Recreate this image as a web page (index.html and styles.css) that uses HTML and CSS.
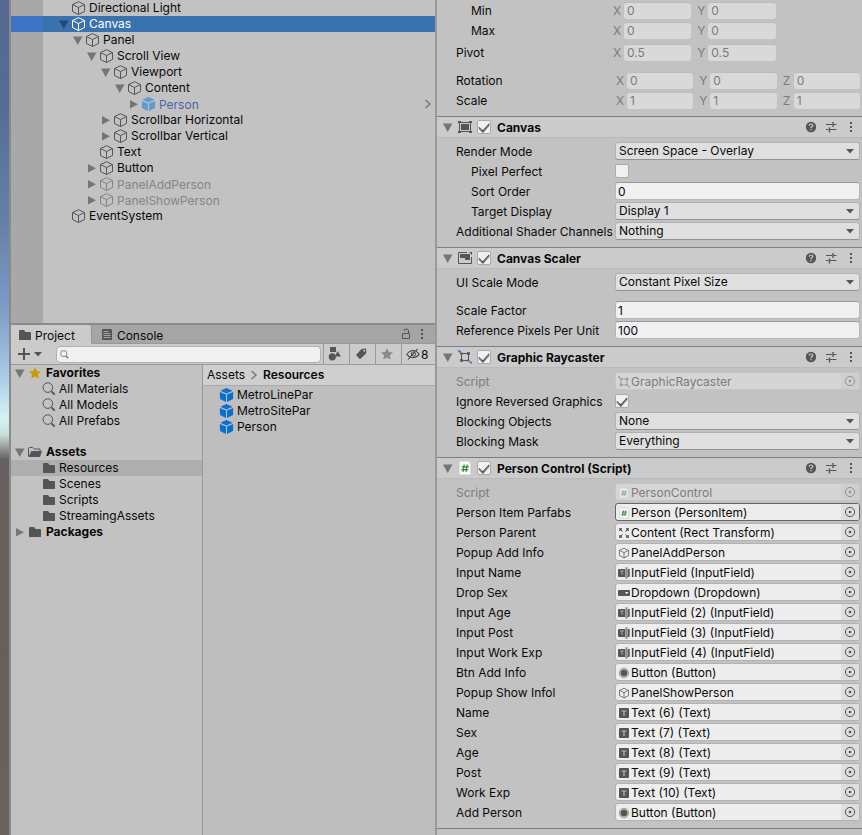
FILE: index.html
```html
<!DOCTYPE html>
<html lang="en">
<head>
<meta charset="utf-8">
<title>Editor</title>
<link rel="stylesheet" href="styles.css">
</head>
<body>
<svg class="defs" aria-hidden="true">
  <symbol id="down" viewBox="0 0 13 16"><path d="M2 4.500h9.500L6.700 13z" fill="currentColor"/></symbol>
  <symbol id="right" viewBox="0 0 13 16"><path d="M3 4v8.500L11 8.200z" fill="currentColor"/></symbol>
  <symbol id="cube" viewBox="0 0 15 16"><path d="M7.500 1.700 13.500 4.500v7L7.500 14.500 1.500 11.500v-7zM1.600 4.600 7.500 7.500l5.900-2.900M7.500 7.500v7" fill="none" stroke="currentColor" stroke-width="1" stroke-linejoin="round"/></symbol>
  <symbol id="prefab" viewBox="0 0 15 16"><path d="M7.500 1 13.600 3.700 7.500 6.500 1.400 3.700zM.9 4.900 7 7.600V15L.9 12zM14.100 4.900 8 7.600V15l6.100-3z" fill="currentColor"/></symbol>
  <symbol id="folder" viewBox="0 0 14 14"><path d="M1 3q0-1 1-1h4l1.500 2H12q1 0 1 1v7H1z" fill="currentColor"/></symbol>
  <symbol id="openfolder" viewBox="0 0 14 14"><path d="M.5 11.500V3.500q0-1 1-1h3L6.500 4H12v2" fill="none" stroke="currentColor" stroke-width="1"/><path d="M3.300 6H14L12 12H.5z" fill="currentColor"/></symbol>
  <symbol id="star" viewBox="0 0 14 14"><path d="m7 1 1.800 3.900 4.200.5-3.100 2.900.8 4.300L7 10.500l-3.700 2.100.8-4.300L1 5.400l4.200-.5z" fill="currentColor"/></symbol>
  <symbol id="search" viewBox="0 0 14 14"><circle cx="5.800" cy="5.600" r="4.800" fill="none" stroke="currentColor" stroke-width="1"/><path d="m9.500 9.500 3.200 3.200" stroke="currentColor" stroke-width="1.800"/></symbol>
  <symbol id="console" viewBox="0 0 14 14"><path d="M3 1h8l1 1v10H3q-1 0-1-1V2q0-1 1-1z" fill="currentColor"/><path d="M3.500 3.500h5M3.500 5.500h7M3.500 7.500h7M3.500 9.500h7" stroke="#a5a5a5" stroke-width="1"/></symbol>
  <symbol id="dots" viewBox="0 0 6 14"><path d="M2 2h2v2H2zM2 6h2v2H2zM2 10h2v2H2z" fill="currentColor"/></symbol>
  <symbol id="lock" viewBox="0 0 12 14"><path d="M2.500 6.500h7V11.500h-7zM4 4q0-2 2-2 2.500 0 2.500 2v2.500" fill="none" stroke="currentColor"/></symbol>
  <symbol id="caret" viewBox="0 0 10 6"><path d="M1 1h8L5 5.500z" fill="currentColor"/></symbol>
  <symbol id="tag" viewBox="0 0 14 14"><path d="M7.500 2 12 1.500l.3 4.700-6.300 6L2 8z" fill="currentColor"/><circle cx="10.200" cy="3.700" r="1" fill="#cbcbcb"/></symbol>
  <symbol id="shapes" viewBox="0 0 14 14"><path d="M2 0h6v5H2zM9.500 4 13 9.500H7z" fill="currentColor"/><circle cx="4.300" cy="9.800" r="3.600" fill="currentColor"/></symbol>
  <symbol id="eye" viewBox="0 0 14 12"><path d="M.8 6.500Q3.500 2.500 7 2.500t6.200 3.700Q10.500 9.800 7 9.800T.8 6.500zM2 11.500 11.500.8" fill="none" stroke="currentColor" stroke-width="1.100"/><circle cx="7.400" cy="6" r="2.100" fill="none" stroke="currentColor"/></symbol>
  <symbol id="help" viewBox="0 0 12 12"><circle cx="6" cy="6" r="5.200" fill="currentColor"/><path d="M4.200 4.700q0-1.700 1.800-1.700t1.800 1.500Q7.800 5.400 6 6.300v.9M6 8v1.300" fill="none" stroke="#cbcbcb" stroke-width="1.200"/></symbol>
  <symbol id="sliders" viewBox="0 0 12 12"><path d="M1 3.500h6M8 3.500h3.500M1 8.500h2.500M5 8.500h6.500" stroke="currentColor" stroke-width="1"/><path d="M8 1v5M4.500 6.500v5" stroke="currentColor" stroke-width="1.400"/></symbol>
  <symbol id="picker" viewBox="0 0 12 12"><circle cx="6" cy="6" r="4.600" fill="none" stroke="currentColor"/><circle cx="6" cy="6" r="1.300" fill="currentColor"/></symbol>
  <symbol id="canvas" viewBox="0 0 14 12"><path d="M1.500 1.500h11v9h-11z" fill="none" stroke="currentColor"/><path d="M3 3h8v6H3zM0 0h3v2H0zM11 0h3v2h-3zM0 10h3v2H0zM11 10h3v2h-3z" fill="currentColor"/></symbol>
  <symbol id="scaler" viewBox="0 0 14 12"><path d="M9 .5H.5v11h13V5" fill="none" stroke="currentColor"/><path d="M2 2h10v6H7V6H2zM11 0h3v3z" fill="currentColor"/></symbol>
  <symbol id="raycaster" viewBox="0 0 14 14"><path d="M3.500 3.500h7v7h-7z" fill="none" stroke="currentColor"/><path d="M2 2.500h3v2H2zM9 2h3v3H9zM2 9h3v3H2zM9 9.500h2.500v2H9z" fill="currentColor" opacity=".8"/><path d="m.3.500 2.500 2M11.800 11.500l1.900 1.900" stroke="#1d7bd8" stroke-width="1.700"/></symbol>
  <symbol id="script" viewBox="0 0 14 16"><path d="M2 1h8.500L13 3.500V14q0 1-1 1H2q-1 0-1-1V2q0-1 1-1z" fill="#f8f8f8" stroke="#b2b2b2" stroke-width=".5"/><path d="M6.200 4.500 5 12M9.200 4.500 8 12M3.800 6.800h7M3.300 9.700h7" stroke="#2c8a32" stroke-width="1.200"/></symbol>
  <symbol id="rect" viewBox="0 0 12 12"><path d="m2 2 3 3M10 2 7 5M2 10l3-3M10 10 7 7" stroke="#888"/><path d="M1 1h3v3H1zM8 1h3v3H8zM1 8h3v3H1zM8 8h3v3H8z" fill="currentColor" opacity=".8"/></symbol>
  <symbol id="inputfield" viewBox="0 0 12 12"><path d="M1 2h6.500v8H1q-1 0-1-1V3q0-1 1-1zM9.500 2H11q.7 0 .7.700v6.600q0 .7-.7.700H9.500z" fill="currentColor"/><path d="M8.500 1v10M7 1h3M7 11h3" stroke="#888" stroke-width="1"/><path d="M2.200 4h3.600M4 4v4" stroke="#a8a8a8"/></symbol>
  <symbol id="dropdown" viewBox="0 0 12 12"><rect y="3" width="12" height="6" rx="1" fill="currentColor"/><path d="M7 5h3.500L8.700 7.500z" fill="#eee"/></symbol>
  <symbol id="button" viewBox="0 0 12 12"><circle cx="6" cy="6" r="4.700" fill="#bbb" stroke="#999"/><circle cx="6" cy="6" r="3.300" fill="currentColor"/></symbol>
  <symbol id="text" viewBox="0 0 12 12"><rect x="1" y="1" width="10" height="10" rx="1" fill="currentColor"/><path d="M3.500 4h5M6 4v5" stroke="#bbb" stroke-width="1.200"/></symbol>
</svg>

<main class="editor">
  <div class="scene"></div>
  <div class="left">
    <section class="hierarchy" aria-label="Hierarchy">
      <div class="node d1"><span class="fold"></span><svg class="cube"><use href="#cube"/></svg>Directional Light</div>
      <div class="node d1 selected"><svg class="fold"><use href="#down"/></svg><svg class="cube"><use href="#cube"/></svg>Canvas</div>
      <div class="node d2"><svg class="fold"><use href="#down"/></svg><svg class="cube"><use href="#cube"/></svg>Panel</div>
      <div class="node d3"><svg class="fold"><use href="#down"/></svg><svg class="cube"><use href="#cube"/></svg>Scroll View</div>
      <div class="node d4"><svg class="fold"><use href="#down"/></svg><svg class="cube"><use href="#cube"/></svg>Viewport</div>
      <div class="node d5"><svg class="fold"><use href="#down"/></svg><svg class="cube"><use href="#cube"/></svg>Content</div>
      <div class="node d6 instance"><svg class="fold"><use href="#right"/></svg><svg class="cube"><use href="#prefab"/></svg><span>Person</span><svg class="open" viewBox="0 0 8 12"><path d="m1.500 2 4.500 4-4.500 4" fill="none" stroke="currentColor" stroke-width="1.500"/></svg></div>
      <div class="node d4"><svg class="fold"><use href="#right"/></svg><svg class="cube"><use href="#cube"/></svg>Scrollbar Horizontal</div>
      <div class="node d4"><svg class="fold"><use href="#right"/></svg><svg class="cube"><use href="#cube"/></svg>Scrollbar Vertical</div>
      <div class="node d3"><span class="fold"></span><svg class="cube"><use href="#cube"/></svg>Text</div>
      <div class="node d3"><svg class="fold"><use href="#right"/></svg><svg class="cube"><use href="#cube"/></svg>Button</div>
      <div class="node d3 inactive"><svg class="fold"><use href="#right"/></svg><svg class="cube"><use href="#cube"/></svg><span>PanelAddPerson</span></div>
      <div class="node d3 inactive"><svg class="fold"><use href="#right"/></svg><svg class="cube"><use href="#cube"/></svg><span>PanelShowPerson</span></div>
      <div class="node d1"><span class="fold"></span><svg class="cube"><use href="#cube"/></svg>EventSystem</div>
    </section>

    <section class="project" aria-label="Project">
      <div class="tabs">
        <button class="tab active"><svg class="i14"><use href="#folder"/></svg><span>Project</span></button>
        <button class="tab"><svg class="i14"><use href="#console"/></svg><span>Console</span></button>
        <button class="tool-icon push" aria-label="Lock"><svg class="lock"><use href="#lock"/></svg></button>
        <button class="tool-icon" aria-label="Menu"><svg class="dots"><use href="#dots"/></svg></button>
      </div>
      <div class="toolbar">
        <button class="add" aria-label="Create"><svg class="plus" viewBox="0 0 12 12"><path d="M6 0v12M0 6h12" stroke="currentColor" stroke-width="2"/></svg><svg class="caret"><use href="#caret"/></svg></button>
        <div class="searchbox"><svg><use href="#search"/></svg><input type="text" aria-label="Search"></div>
        <button class="filter" aria-label="Search by type"><svg class="i14"><use href="#shapes"/></svg></button>
        <button class="filter" aria-label="Search by label"><svg class="i14"><use href="#tag"/></svg></button>
        <button class="filter faded" aria-label="Save search"><svg class="i14"><use href="#star"/></svg></button>
        <button class="filter hidden-count" aria-label="Hidden packages"><svg class="eye"><use href="#eye"/></svg><span>8</span></button>
      </div>
      <div class="browser">
        <nav class="tree" aria-label="Folders">
          <div class="item top"><svg class="fold"><use href="#down"/></svg><svg class="i14 gold"><use href="#star"/></svg>Favorites</div>
          <div class="item"><svg class="i14 lens"><use href="#search"/></svg>All Materials</div>
          <div class="item"><svg class="i14 lens"><use href="#search"/></svg>All Models</div>
          <div class="item"><svg class="i14 lens"><use href="#search"/></svg>All Prefabs</div>
          <div class="item top spaced"><svg class="fold"><use href="#down"/></svg><svg class="i14"><use href="#openfolder"/></svg>Assets</div>
          <div class="item current"><svg class="i14"><use href="#folder"/></svg>Resources</div>
          <div class="item"><svg class="i14"><use href="#folder"/></svg>Scenes</div>
          <div class="item"><svg class="i14"><use href="#folder"/></svg>Scripts</div>
          <div class="item"><svg class="i14"><use href="#folder"/></svg>StreamingAssets</div>
          <div class="item top"><svg class="fold"><use href="#right"/></svg><svg class="i14"><use href="#folder"/></svg>Packages</div>
        </nav>
        <div class="files">
          <div class="crumbs"><span>Assets</span><svg viewBox="0 0 8 12"><path d="m1.500 2 4.500 4-4.500 4" fill="none" stroke="currentColor" stroke-width="1.500"/></svg><b>Resources</b></div>
          <div class="list">
            <div class="file"><svg class="cube"><use href="#prefab"/></svg>MetroLinePar</div>
            <div class="file"><svg class="cube"><use href="#prefab"/></svg>MetroSitePar</div>
            <div class="file"><svg class="cube"><use href="#prefab"/></svg>Person</div>
          </div>
        </div>
      </div>
    </section>
  </div>

  <section class="inspector" aria-label="Inspector">
    <div class="rows transform">
      <div class="row wide sub"><span class="label">Min</span><div class="vec"><label><span>X</span><input value="0" disabled></label><label><span>Y</span><input value="0" disabled></label></div></div>
      <div class="row wide sub"><span class="label">Max</span><div class="vec"><label><span>X</span><input value="0" disabled></label><label><span>Y</span><input value="0" disabled></label></div></div>
      <div class="row wide pivot"><span class="label">Pivot</span><div class="vec"><label><span>X</span><input value="0.5" disabled></label><label><span>Y</span><input value="0.5" disabled></label></div></div>
      <div class="row gap"><span class="label">Rotation</span><div class="vec"><label><span>X</span><input value="0" disabled></label><label><span>Y</span><input value="0" disabled></label><label><span>Z</span><input value="0" disabled></label></div></div>
      <div class="row"><span class="label">Scale</span><div class="vec"><label><span>X</span><input value="1" disabled></label><label><span>Y</span><input value="1" disabled></label><label><span>Z</span><input value="1" disabled></label></div></div>
    </div>

    <section class="component">
      <header><svg class="fold"><use href="#down"/></svg><svg class="kind"><use href="#canvas"/></svg><input type="checkbox" id="canvas-on" checked><label for="canvas-on">Canvas</label>
        <button aria-label="Help"><svg><use href="#help"/></svg></button><button aria-label="Presets"><svg><use href="#sliders"/></svg></button><button aria-label="Menu"><svg class="dots"><use href="#dots"/></svg></button></header>
      <div class="rows">
        <div class="row"><label class="label" for="render">Render Mode</label><div class="select"><select id="render"><option>Screen Space - Overlay</option></select><svg><use href="#caret"/></svg></div></div>
        <div class="row sub"><label class="label" for="pixel">Pixel Perfect</label><input type="checkbox" id="pixel"></div>
        <div class="row sub"><label class="label" for="order">Sort Order</label><input class="field" id="order" value="0"></div>
        <div class="row sub"><label class="label" for="display">Target Display</label><div class="select"><select id="display"><option>Display 1</option></select><svg><use href="#caret"/></svg></div></div>
        <div class="row"><label class="label" for="channels">Additional Shader Channels</label><div class="select"><select id="channels"><option>Nothing</option></select><svg><use href="#caret"/></svg></div></div>
      </div>
    </section>

    <section class="component">
      <header><svg class="fold"><use href="#down"/></svg><svg class="kind"><use href="#scaler"/></svg><input type="checkbox" id="scaler-on" checked><label for="scaler-on">Canvas Scaler</label>
        <button aria-label="Help"><svg><use href="#help"/></svg></button><button aria-label="Presets"><svg><use href="#sliders"/></svg></button><button aria-label="Menu"><svg class="dots"><use href="#dots"/></svg></button></header>
      <div class="rows">
        <div class="row"><label class="label" for="scalemode">UI Scale Mode</label><div class="select"><select id="scalemode"><option>Constant Pixel Size</option></select><svg><use href="#caret"/></svg></div></div>
        <div class="row gap"><label class="label" for="factor">Scale Factor</label><input class="field" id="factor" value="1"></div>
        <div class="row"><label class="label" for="ppu">Reference Pixels Per Unit</label><input class="field" id="ppu" value="100"></div>
      </div>
    </section>

    <section class="component">
      <header><svg class="fold"><use href="#down"/></svg><svg class="kind"><use href="#raycaster"/></svg><input type="checkbox" id="ray-on" checked><label for="ray-on">Graphic Raycaster</label>
        <button aria-label="Help"><svg><use href="#help"/></svg></button><button aria-label="Presets"><svg><use href="#sliders"/></svg></button><button aria-label="Menu"><svg class="dots"><use href="#dots"/></svg></button></header>
      <div class="rows">
        <div class="row off"><label class="label" for="rayscript">Script</label><div class="object"><button class="ref" id="rayscript" disabled><svg><use href="#raycaster"/></svg>GraphicRaycaster</button><button class="pick" aria-label="Select" disabled><svg><use href="#picker"/></svg></button></div></div>
        <div class="row"><label class="label" for="ignore">Ignore Reversed Graphics</label><input type="checkbox" id="ignore" checked></div>
        <div class="row"><label class="label" for="blockobj">Blocking Objects</label><div class="select"><select id="blockobj"><option>None</option></select><svg><use href="#caret"/></svg></div></div>
        <div class="row"><label class="label" for="blockmask">Blocking Mask</label><div class="select"><select id="blockmask"><option>Everything</option></select><svg><use href="#caret"/></svg></div></div>
      </div>
    </section>

    <section class="component last">
      <header><svg class="fold"><use href="#down"/></svg><svg class="kind"><use href="#script"/></svg><input type="checkbox" id="person-on" checked><label for="person-on">Person Control (Script)</label>
        <button aria-label="Help"><svg><use href="#help"/></svg></button><button aria-label="Presets"><svg><use href="#sliders"/></svg></button><button aria-label="Menu"><svg class="dots"><use href="#dots"/></svg></button></header>
      <div class="rows">
        <div class="row off"><label class="label" for="o0">Script</label><div class="object"><button class="ref" id="o0" disabled><svg><use href="#script"/></svg>PersonControl</button><button class="pick" aria-label="Select" disabled><svg><use href="#picker"/></svg></button></div></div>
        <div class="row"><label class="label" for="o1">Person Item Parfabs</label><div class="object focused"><button class="ref" id="o1"><svg><use href="#script"/></svg>Person (PersonItem)</button><button class="pick" aria-label="Select"><svg><use href="#picker"/></svg></button></div></div>
        <div class="row"><label class="label" for="o2">Person Parent</label><div class="object"><button class="ref" id="o2"><svg><use href="#rect"/></svg>Content (Rect Transform)</button><button class="pick" aria-label="Select"><svg><use href="#picker"/></svg></button></div></div>
        <div class="row"><label class="label" for="o3">Popup Add Info</label><div class="object"><button class="ref" id="o3"><svg><use href="#cube"/></svg>PanelAddPerson</button><button class="pick" aria-label="Select"><svg><use href="#picker"/></svg></button></div></div>
        <div class="row"><label class="label" for="o4">Input Name</label><div class="object"><button class="ref" id="o4"><svg><use href="#inputfield"/></svg>InputField (InputField)</button><button class="pick" aria-label="Select"><svg><use href="#picker"/></svg></button></div></div>
        <div class="row"><label class="label" for="o5">Drop Sex</label><div class="object"><button class="ref" id="o5"><svg><use href="#dropdown"/></svg>Dropdown (Dropdown)</button><button class="pick" aria-label="Select"><svg><use href="#picker"/></svg></button></div></div>
        <div class="row"><label class="label" for="o6">Input Age</label><div class="object"><button class="ref" id="o6"><svg><use href="#inputfield"/></svg>InputField (2) (InputField)</button><button class="pick" aria-label="Select"><svg><use href="#picker"/></svg></button></div></div>
        <div class="row"><label class="label" for="o7">Input Post</label><div class="object"><button class="ref" id="o7"><svg><use href="#inputfield"/></svg>InputField (3) (InputField)</button><button class="pick" aria-label="Select"><svg><use href="#picker"/></svg></button></div></div>
        <div class="row"><label class="label" for="o8">Input Work Exp</label><div class="object"><button class="ref" id="o8"><svg><use href="#inputfield"/></svg>InputField (4) (InputField)</button><button class="pick" aria-label="Select"><svg><use href="#picker"/></svg></button></div></div>
        <div class="row"><label class="label" for="o9">Btn Add Info</label><div class="object"><button class="ref" id="o9"><svg><use href="#button"/></svg>Button (Button)</button><button class="pick" aria-label="Select"><svg><use href="#picker"/></svg></button></div></div>
        <div class="row"><label class="label" for="o10">Popup Show Infol</label><div class="object"><button class="ref" id="o10"><svg><use href="#cube"/></svg>PanelShowPerson</button><button class="pick" aria-label="Select"><svg><use href="#picker"/></svg></button></div></div>
        <div class="row"><label class="label" for="o11">Name</label><div class="object"><button class="ref" id="o11"><svg><use href="#text"/></svg>Text (6) (Text)</button><button class="pick" aria-label="Select"><svg><use href="#picker"/></svg></button></div></div>
        <div class="row"><label class="label" for="o12">Sex</label><div class="object"><button class="ref" id="o12"><svg><use href="#text"/></svg>Text (7) (Text)</button><button class="pick" aria-label="Select"><svg><use href="#picker"/></svg></button></div></div>
        <div class="row"><label class="label" for="o13">Age</label><div class="object"><button class="ref" id="o13"><svg><use href="#text"/></svg>Text (8) (Text)</button><button class="pick" aria-label="Select"><svg><use href="#picker"/></svg></button></div></div>
        <div class="row"><label class="label" for="o14">Post</label><div class="object"><button class="ref" id="o14"><svg><use href="#text"/></svg>Text (9) (Text)</button><button class="pick" aria-label="Select"><svg><use href="#picker"/></svg></button></div></div>
        <div class="row"><label class="label" for="o15">Work Exp</label><div class="object"><button class="ref" id="o15"><svg><use href="#text"/></svg>Text (10) (Text)</button><button class="pick" aria-label="Select"><svg><use href="#picker"/></svg></button></div></div>
        <div class="row"><label class="label" for="o16">Add Person</label><div class="object"><button class="ref" id="o16"><svg><use href="#button"/></svg>Button (Button)</button><button class="pick" aria-label="Select"><svg><use href="#picker"/></svg></button></div></div>
      </div>
    </section>
  </section>
</main>
</body>
</html>
```
FILE: styles.css
```css
* { box-sizing: border-box; }
body { margin: 0; background: #c2c2c2; color: #090909; font: 12px/16px Inter, sans-serif; }
button, input, select { font: inherit; color: inherit; margin: 0; padding: 0; border: 0; background: none; border-radius: 0; min-width: 0; }
svg { display: block; flex: none; }
.defs { position: absolute; width: 0; height: 0; }

.editor { display: grid; grid-template-columns: 9px 426fr 427fr; min-height: 100vh; }
.scene { background: linear-gradient(#566891 0, #546b98 12%, #6680ab 27%, #7d9cc8 37%, #a9cbe3 45%, #d4f2f2 50%, #cbdfdd 52%, #666160 55%, #685f59 78%, #6b625d 100%); }
.left { display: grid; grid-template-rows: minmax(224px, 325fr) minmax(0, 510fr); border-left: 2px solid #8a8a8a; min-width: 0; }

.fold { width: 13px; height: 16px; color: #757575; flex: none; }
.cube { width: 15px; height: 16px; color: #555; }
.i14 { width: 14px; height: 14px; color: #555; }
.dots { width: 6px; height: 14px; }

/* hierarchy */
.hierarchy { border-bottom: 2px solid #8a8a8a; background: linear-gradient(90deg, #a8a8a8 32px, #c2c2c2 32px); overflow: hidden; }
.node { display: flex; align-items: center; height: 16px; white-space: nowrap; }
.node .cube { margin: 0 3px 0 1px; }
.d1 { padding-left: 46px; }
.d2 { padding-left: 60px; }
.d3 { padding-left: 74px; }
.d4 { padding-left: 88px; }
.d5 { padding-left: 102px; }
.d6 { padding-left: 116px; }
.selected { color: #fff; background: linear-gradient(90deg, #3f74c5 32px, #3a72b0 32px); }
.selected .cube { color: #fff; }
.selected .fold { color: #234a73; }
.inactive, .inactive .cube { color: #858585; }
.inactive span, .instance span { padding-top: 2px; }
.instance { color: #4d66a8; }
.instance .cube { color: #629ad2; }
.open { width: 8px; height: 12px; margin: 0 3px 0 auto; color: #777; }

/* project */
.project { display: flex; flex-direction: column; min-height: 0; }
.tabs { display: flex; height: 19px; background: #a5a5a5; }
.tab { display: flex; align-items: center; gap: 3px; height: 19px; padding: 1px 16px 0 7px; border-bottom: 1px solid #999; }
.tab span { padding-top: 2px; }
.tab.active { background: #cbcbcb; border-right: 1px solid #959595; border-bottom-color: #cbcbcb; border-top-right-radius: 3px; }
.tab + .tab { padding-left: 8px; flex: 1; }
.tool-icon { display: flex; align-items: center; padding: 0 3px; color: #555; border-bottom: 1px solid #999; }
.tool-icon + .tool-icon { padding: 0 10px 0 4px; }
.lock { width: 12px; height: 14px; }
.toolbar { display: flex; height: 21px; background: #cbcbcb; border-bottom: 1px solid #999; }
.add { display: flex; align-items: center; gap: 3px; width: 45px; padding-left: 7px; color: #555; }
.plus { width: 12px; height: 12px; }
.caret { width: 10px; height: 6px; }
.searchbox { display: flex; align-items: center; flex: 1; height: 17px; margin: 2px 2px 0 0; padding-left: 3px; background: #f0f0f0; border: 1px solid #b0b0b0; border-radius: 4px; color: #555; }
.searchbox svg { width: 9px; height: 9px; }
.searchbox input { flex: 1; outline: 0; }
.filter { display: flex; align-items: center; width: 26px; padding-left: 4px; border-left: 1px solid #999; }
.faded svg { color: #8a8a8a; }
.hidden-count { width: 34px; gap: 1px; }
.hidden-count span { padding-top: 2px; }
.eye { width: 14px; height: 12px; color: #444; }
.browser { display: grid; grid-template-columns: 192px minmax(0, 1fr); flex: 1; }
.tree { border-right: 1px solid #999; }
.item { display: flex; align-items: center; gap: 3px; height: 16px; padding-left: 31px; }
.top { padding-left: 2px; gap: 2px; font-weight: 700; }
.top .i14 { margin-right: 2px; }
.spaced { margin-top: 15px; }
.gold { color: #cc9a06; }
.current { background: #aeaeae; }
.files { background: #bebebe; }
.crumbs { display: flex; align-items: center; gap: 5px; height: 21px; padding-left: 4px; background: #cfcfcf; border-bottom: 1px solid #aaa; }
.crumbs b { font-weight: 600; }
.crumbs svg { width: 8px; height: 12px; color: #777; }
.list { padding-top: 1px; }
.file { display: flex; align-items: center; gap: 3px; height: 16px; padding-left: 16px; }
.file .cube { color: #0e6fd2; }

/* inspector */
.inspector { border-left: 2px solid #999; min-width: 0; }
.rows { display: flex; flex-direction: column; gap: 2px; padding: 4px 2px 7px 19px; }
.transform { padding-top: 1px; }
.row { display: grid; grid-template-columns: 159px minmax(0, 1fr); align-items: center; height: 18px; }
.row.wide { grid-template-columns: 156px minmax(0, 1fr); }
.pivot { margin-top: 2px; }
.gap { margin-top: 8px; }
.label { padding-top: 2px; white-space: nowrap; }
.sub .label { padding-left: 15px; }
.off { color: #7c7c7c; }
.vec { display: grid; grid-template-columns: repeat(3, minmax(0, 1fr)); gap: 5px; color: #7c7c7c; }
.vec label { display: grid; grid-template-columns: 12px minmax(0, 1fr); align-items: center; }
.vec span { padding: 2px 0 0 1px; }
.vec input { height: 17px; padding: 0 0 0 3px; background: #d9d9d9; border-radius: 3px; border-top: 1px solid #bcbcbc; }
.field { height: 18px; width: 100%; padding: 1px 3px 0 2px; background: #f0f0f0; border: 1px solid #b7b7b7; border-top-color: #999; border-radius: 3px; }
.select { display: grid; grid-template-columns: minmax(0, 1fr); align-items: center; }
.select select, .select svg { grid-area: 1 / 1; }
.select select { appearance: none; height: 18px; padding: 0 20px 1px 3px; background: #dfdfdf; border: 1px solid #b2b2b2; border-bottom-color: #939393; border-radius: 3px; }
.select svg { width: 10px; height: 6px; justify-self: end; margin-right: 5px; color: #555; pointer-events: none; }
input[type=checkbox] { appearance: none; width: 14px; height: 14px; background: #f0f0f0; border: 1px solid #aaa; border-radius: 2px; display: grid; place-items: center; }
input[type=checkbox]:checked::after { content: ""; width: 9px; height: 5px; margin-bottom: 3px; border: solid #3f3f3f; border-width: 0 0 1px 1px; box-shadow: -1px 1px 0 -0px #8c8c8c; transform: rotate(-48deg); }

.component { border-top: 1px solid #7f7f7f; }
.component header { display: flex; align-items: center; height: 21px; padding: 0 5px 0 4px; background: #cbcbcb; border-bottom: 1px solid #bababa; }
.kind { width: 14px; height: 16px; margin: 0 5px 0 4px; color: #555; }
header label { flex: 1; padding: 1px 0 0 6px; font-weight: 700; }
header button { margin-left: 8px; color: #555; }
header button svg { width: 12px; height: 12px; }
header .dots { width: 6px; height: 14px; margin: 0 3px; }
.last { border-bottom: 1px solid #7f7f7f; }

.object { display: flex; height: 18px; background: #ededed; border: 1px solid #b2b2b2; border-radius: 3px; overflow: hidden; }
.focused { border-color: #666; }
.ref { display: flex; align-items: center; flex: 1; gap: 1px; padding: 1px 0 0 2px; white-space: nowrap; }
.ref svg { width: 12px; height: 12px; color: #555; }
.pick { display: grid; place-items: center; width: 18px; background: #dedede; color: #555; }
.pick svg { width: 12px; height: 12px; }
.off .object { background: #d5d5d5; border-color: #c6c6c6; }
.off .pick { background: #cfcfcf; }
.off svg { opacity: .5; }
```
